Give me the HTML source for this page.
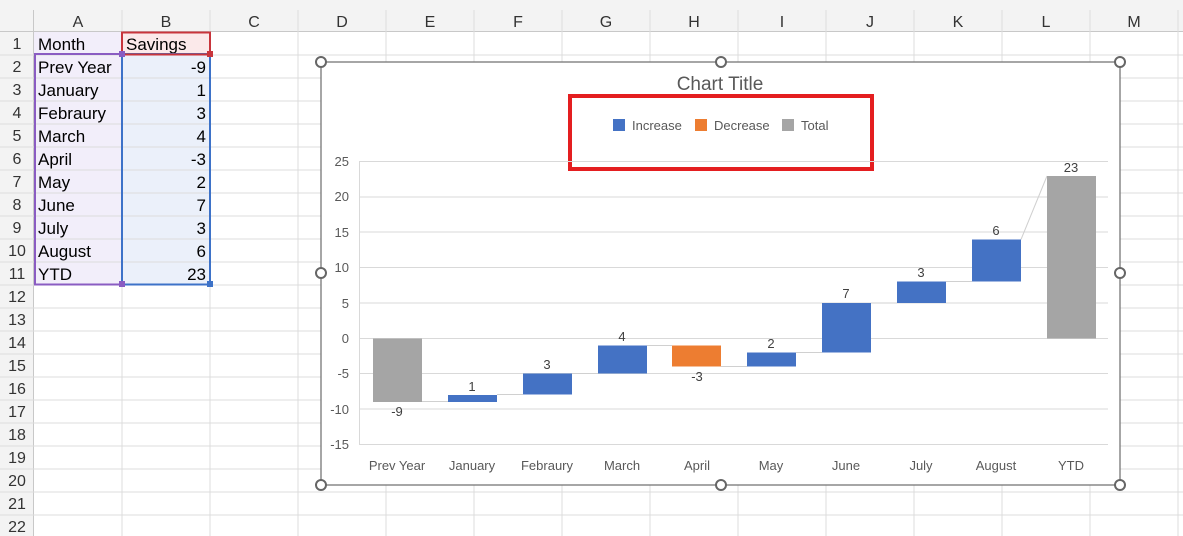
<!DOCTYPE html><html><head><meta charset="utf-8"><style>
body{margin:0;width:1183px;height:536px;overflow:hidden;background:#fff;font-family:"Liberation Sans",sans-serif;position:relative}
.a{position:absolute}
</style></head><body>
<svg class="a" style="left:0;top:0" width="1183" height="536">
<rect x="0" y="0" width="1183" height="10" fill="#f3f3f3"/>
<rect x="0" y="10" width="1183" height="22" fill="#f3f3f3"/>
<rect x="0" y="10" width="34" height="526" fill="#f3f3f3"/>
<line x1="0" y1="31.5" x2="1183" y2="31.5" stroke="#c8c8c8"/>
<line x1="33.5" y1="10" x2="33.5" y2="536" stroke="#c8c8c8"/>
<rect x="34" y="32" width="88" height="253" fill="#f2eefa"/>
<rect x="122" y="55" width="88" height="230" fill="#ebf0fa"/>
<rect x="122" y="32" width="88" height="23" fill="#fbe9ea"/>
<g stroke="#dcdcdc">
<line x1="122" y1="10" x2="122" y2="536"/><line x1="210" y1="10" x2="210" y2="536"/><line x1="298" y1="10" x2="298" y2="536"/><line x1="386" y1="10" x2="386" y2="536"/><line x1="474" y1="10" x2="474" y2="536"/><line x1="562" y1="10" x2="562" y2="536"/><line x1="650" y1="10" x2="650" y2="536"/><line x1="738" y1="10" x2="738" y2="536"/><line x1="826" y1="10" x2="826" y2="536"/><line x1="914" y1="10" x2="914" y2="536"/><line x1="1002" y1="10" x2="1002" y2="536"/><line x1="1090" y1="10" x2="1090" y2="536"/><line x1="1178" y1="10" x2="1178" y2="536"/>
</g>
<g stroke="#dcdcdc" id="rows">
<line x1="0" y1="55" x2="1183" y2="55"/><line x1="0" y1="78" x2="1183" y2="78"/><line x1="0" y1="101" x2="1183" y2="101"/><line x1="0" y1="124" x2="1183" y2="124"/><line x1="0" y1="147" x2="1183" y2="147"/><line x1="0" y1="170" x2="1183" y2="170"/><line x1="0" y1="193" x2="1183" y2="193"/><line x1="0" y1="216" x2="1183" y2="216"/><line x1="0" y1="239" x2="1183" y2="239"/><line x1="0" y1="262" x2="1183" y2="262"/><line x1="0" y1="285" x2="1183" y2="285"/><line x1="0" y1="308" x2="1183" y2="308"/><line x1="0" y1="331" x2="1183" y2="331"/><line x1="0" y1="354" x2="1183" y2="354"/><line x1="0" y1="377" x2="1183" y2="377"/><line x1="0" y1="400" x2="1183" y2="400"/><line x1="0" y1="423" x2="1183" y2="423"/><line x1="0" y1="446" x2="1183" y2="446"/><line x1="0" y1="469" x2="1183" y2="469"/><line x1="0" y1="492" x2="1183" y2="492"/><line x1="0" y1="515" x2="1183" y2="515"/>
</g>
<g font-size="16" fill="#333" text-anchor="middle">
<text x="78" y="27">A</text><text x="166" y="27">B</text><text x="254" y="27">C</text><text x="342" y="27">D</text><text x="430" y="27">E</text><text x="518" y="27">F</text><text x="606" y="27">G</text><text x="694" y="27">H</text><text x="782" y="27">I</text><text x="870" y="27">J</text><text x="958" y="27">K</text><text x="1046" y="27">L</text><text x="1134" y="27">M</text>
</g>
<g font-size="16" fill="#333" text-anchor="middle">
<text x="17" y="49">1</text><text x="17" y="72">2</text><text x="17" y="95">3</text><text x="17" y="118">4</text><text x="17" y="141">5</text><text x="17" y="164">6</text><text x="17" y="187">7</text><text x="17" y="210">8</text><text x="17" y="233">9</text><text x="17" y="256">10</text><text x="17" y="279">11</text><text x="17" y="302">12</text><text x="17" y="325">13</text><text x="17" y="348">14</text><text x="17" y="371">15</text><text x="17" y="394">16</text><text x="17" y="417">17</text><text x="17" y="440">18</text><text x="17" y="463">19</text><text x="17" y="486">20</text><text x="17" y="509">21</text><text x="17" y="532">22</text>
</g>
<g font-size="17" fill="#000">
<text x="38" y="50">Month</text><text x="38" y="73">Prev Year</text><text x="38" y="96">January</text><text x="38" y="119">Febraury</text><text x="38" y="142">March</text><text x="38" y="165">April</text><text x="38" y="188">May</text><text x="38" y="211">June</text><text x="38" y="234">July</text><text x="38" y="257">August</text><text x="38" y="280">YTD</text>
<text x="126" y="50">Savings</text>
</g>
<g font-size="17" fill="#000" text-anchor="end">
<text x="206" y="73">-9</text><text x="206" y="96">1</text><text x="206" y="119">3</text><text x="206" y="142">4</text><text x="206" y="165">-3</text><text x="206" y="188">2</text><text x="206" y="211">7</text><text x="206" y="234">3</text><text x="206" y="257">6</text><text x="206" y="280">23</text>
</g>
<rect x="35" y="54" width="87" height="230.5" fill="none" stroke="#8a5cc2" stroke-width="2"/>
<rect x="122" y="54" width="88" height="230.5" fill="none" stroke="#3d72c8" stroke-width="2"/>
<rect x="122" y="32.5" width="88" height="22" fill="none" stroke="#c8353c" stroke-width="2"/>
<rect x="119" y="51" width="6" height="6" fill="#8a5cc2"/><rect x="207" y="51" width="6" height="6" fill="#c8353c"/><rect x="207" y="281" width="6" height="6" fill="#3d72c8"/><rect x="119" y="281" width="6" height="6" fill="#8a5cc2"/>
<!-- chart -->
<rect x="321" y="62" width="799" height="423" fill="#fff" stroke="#777" stroke-width="1.3"/>
<text x="720" y="90" font-size="19" fill="#595959" text-anchor="middle">Chart Title</text>
<rect x="570" y="96" width="302" height="73" fill="none" stroke="#e41e20" stroke-width="4"/>
<rect x="613" y="119" width="12" height="12" fill="#4472c4"/><text x="632" y="130" font-size="13" fill="#595959">Increase</text>
<rect x="695" y="119" width="12" height="12" fill="#ed7d31"/><text x="714" y="130" font-size="13" fill="#595959">Decrease</text>
<rect x="782" y="119" width="12" height="12" fill="#a5a5a5"/><text x="801" y="130" font-size="13" fill="#595959">Total</text>
<g stroke="#d9d9d9">
<line x1="359" y1="161.5" x2="1108" y2="161.5"/><line x1="359" y1="197" x2="1108" y2="197"/><line x1="359" y1="232" x2="1108" y2="232"/><line x1="359" y1="267.5" x2="1108" y2="267.5"/><line x1="359" y1="303" x2="1108" y2="303"/><line x1="359" y1="338.5" x2="1108" y2="338.5"/><line x1="359" y1="373.5" x2="1108" y2="373.5"/><line x1="359" y1="409" x2="1108" y2="409"/><line x1="359" y1="444.5" x2="1108" y2="444.5"/><line x1="359.5" y1="161" x2="359.5" y2="445"/>
</g>
<g font-size="13" fill="#595959" text-anchor="end">
<text x="349" y="166">25</text><text x="349" y="201">20</text><text x="349" y="237">15</text><text x="349" y="272">10</text><text x="349" y="308">5</text><text x="349" y="343">0</text><text x="349" y="378">-5</text><text x="349" y="414">-10</text><text x="349" y="449">-15</text>
</g>
<g stroke="#d0d0d0">
<line x1="422" y1="401.5" x2="448" y2="401.5"/><line x1="497" y1="394.5" x2="523" y2="394.5"/><line x1="572" y1="373.5" x2="598" y2="373.5"/><line x1="647" y1="345.5" x2="672" y2="345.5"/><line x1="721" y1="366.5" x2="747" y2="366.5"/><line x1="796" y1="352.5" x2="822" y2="352.5"/><line x1="871" y1="303" x2="897" y2="303"/><line x1="946" y1="281.5" x2="972" y2="281.5"/><line x1="1021" y1="239.5" x2="1047" y2="176"/>
</g>
<rect x="373" y="338.5" width="49" height="63.5" fill="#a5a5a5"/>
<rect x="448" y="395" width="49" height="7" fill="#4472c4"/>
<rect x="523" y="373.5" width="49" height="21" fill="#4472c4"/>
<rect x="598" y="345.5" width="49" height="28" fill="#4472c4"/>
<rect x="672" y="345.5" width="49" height="21" fill="#ed7d31"/>
<rect x="747" y="352.5" width="49" height="14" fill="#4472c4"/>
<rect x="822" y="303" width="49" height="49.5" fill="#4472c4"/>
<rect x="897" y="281.5" width="49" height="21.5" fill="#4472c4"/>
<rect x="972" y="239.5" width="49" height="42" fill="#4472c4"/>
<rect x="1047" y="176" width="49" height="162.5" fill="#a5a5a5"/>
<g font-size="13" fill="#404040" text-anchor="middle">
<text x="397" y="416">-9</text><text x="472" y="391">1</text><text x="547" y="369">3</text><text x="622" y="341">4</text><text x="697" y="381">-3</text><text x="771" y="348">2</text><text x="846" y="298">7</text><text x="921" y="277">3</text><text x="996" y="235">6</text><text x="1071" y="172">23</text>
</g>
<g font-size="13" fill="#595959" text-anchor="middle">
<text x="397" y="470">Prev Year</text><text x="472" y="470">January</text><text x="547" y="470">Febraury</text><text x="622" y="470">March</text><text x="697" y="470">April</text><text x="771" y="470">May</text><text x="846" y="470">June</text><text x="921" y="470">July</text><text x="996" y="470">August</text><text x="1071" y="470">YTD</text>
</g>
<g fill="#fff" stroke="#666" stroke-width="2">
<circle cx="321" cy="62" r="5"/><circle cx="721" cy="62" r="5"/><circle cx="1120" cy="62" r="5"/><circle cx="321" cy="273" r="5"/><circle cx="1120" cy="273" r="5"/><circle cx="321" cy="485" r="5"/><circle cx="721" cy="485" r="5"/><circle cx="1120" cy="485" r="5"/>
</g>
</svg>
</body></html>
